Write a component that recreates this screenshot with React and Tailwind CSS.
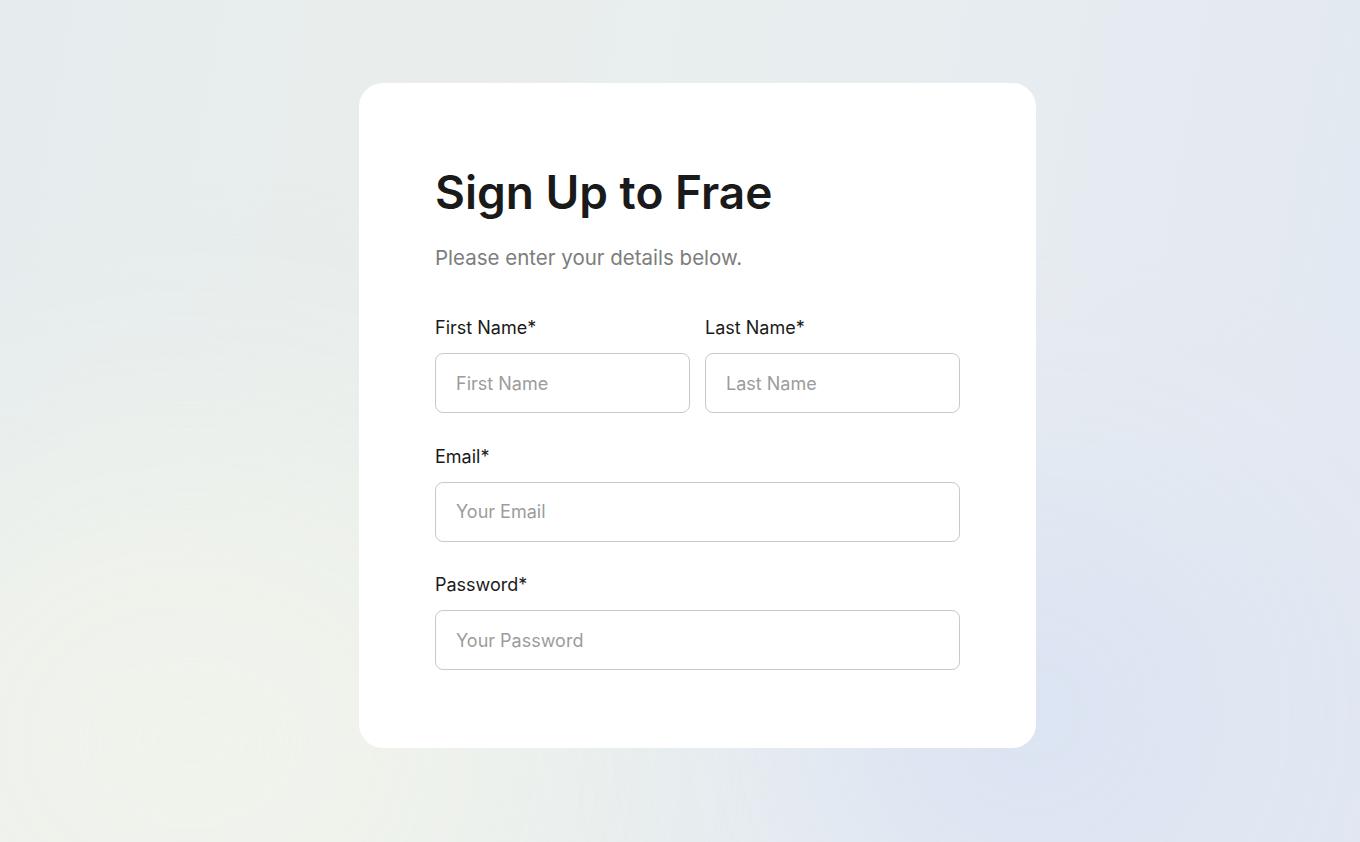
import React from 'react';

const Field = ({ label, placeholder, type = 'text' }) => (
  <div className="flex flex-col flex-1">
    <label className="text-[18px] leading-6 text-[#1a1a1a] mb-[13px]">{label}</label>
    <input
      type={type}
      placeholder={placeholder}
      className="h-[60px] w-full rounded-lg border border-[#c9c9c9] bg-white px-5 text-[18px] text-[#1a1a1a] placeholder:text-[#9c9c9c] outline-none"
    />
  </div>
);

export default function App() {
  return (
    <div
      className="min-h-screen w-full pl-[359px] pt-[83px] pb-[94px] bg-[linear-gradient(100deg,#e6ecee_0%,#e9eeec_30%,#e8edf0_60%,#e2e8f2_100%)] relative overflow-hidden"
      style={{ fontFamily: 'Inter, "Noto Sans", sans-serif' }}
    >
      {/* soft blobs */}
      <div className="pointer-events-none absolute -left-40 bottom-[-200px] h-[600px] w-[700px] rounded-full bg-[#f1f4ec] blur-[120px] opacity-90" />
      <div className="pointer-events-none absolute right-[120px] bottom-[-80px] h-[420px] w-[420px] rounded-full bg-[#d9e2f4] blur-[120px] opacity-90" />

      <div className="relative w-[677px] h-[665px] rounded-3xl bg-white px-[76px] pt-[82px]">
        <h1 className="text-[46px] leading-[54px] font-semibold text-[#1a1a1a]">Sign Up to Frae</h1>
        <p className="mt-[25px] text-[20.5px] leading-7 text-[#7d7d7d]">Please enter your details below.</p>

        <form className="mt-[44px] flex flex-col gap-[31.5px]" onSubmit={(e) => e.preventDefault()}>
          <div className="flex gap-[15px]">
            <Field label="First Name*" placeholder="First Name" />
            <Field label="Last Name*" placeholder="Last Name" />
          </div>
          <Field label="Email*" placeholder="Your Email" type="email" />
          <Field label="Password*" placeholder="Your Password" type="password" />
        </form>
      </div>
    </div>
  );
}
